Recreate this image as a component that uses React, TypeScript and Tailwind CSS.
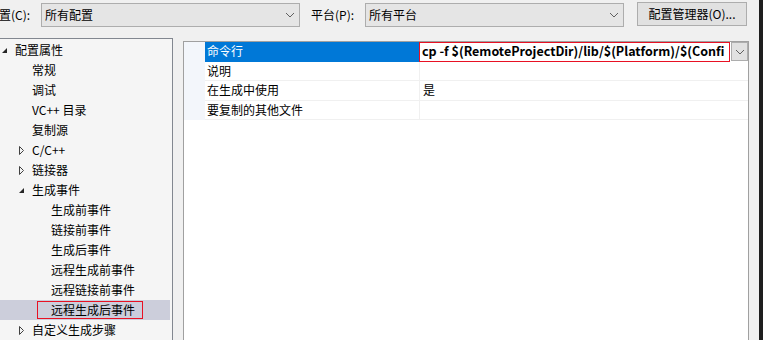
import React from 'react';

const font = { fontFamily: '"Noto Sans CJK SC", "Microsoft YaHei UI", sans-serif' };

function Chevron() {
  return (
    <svg width="10" height="6" viewBox="0 0 10 6" className="shrink-0">
      <polyline points="1,1 5,5 9,1" fill="none" stroke="#606060" strokeWidth="1" />
    </svg>
  );
}

function Expanded() {
  return (
    <svg width="7" height="7" viewBox="0 0 7 7">
      <polygon points="6,1 6,6 1,6" fill="#262626" />
    </svg>
  );
}

function Collapsed() {
  return (
    <svg width="7" height="9" viewBox="0 0 7 9">
      <polygon points="1.5,0.5 5.5,4.5 1.5,8.5" fill="none" stroke="#404040" strokeWidth="1" />
    </svg>
  );
}

type Node = { label: string; indent: number; icon?: 'open' | 'closed'; selected?: boolean };

const tree: Node[] = [
  { label: '配置属性', indent: 0, icon: 'open' },
  { label: '常规', indent: 1 },
  { label: '调试', indent: 1 },
  { label: 'VC++ 目录', indent: 1 },
  { label: '复制源', indent: 1 },
  { label: 'C/C++', indent: 1, icon: 'closed' },
  { label: '链接器', indent: 1, icon: 'closed' },
  { label: '生成事件', indent: 1, icon: 'open' },
  { label: '生成前事件', indent: 2 },
  { label: '链接前事件', indent: 2 },
  { label: '生成后事件', indent: 2 },
  { label: '远程生成前事件', indent: 2 },
  { label: '远程链接前事件', indent: 2 },
  { label: '远程生成后事件', indent: 2, selected: true },
  { label: '自定义生成步骤', indent: 1, icon: 'closed' },
];

const props = [
  { name: '命令行', value: 'cp -f $(RemoteProjectDir)/lib/$(Platform)/$(Confi' },
  { name: '说明', value: '' },
  { name: '在生成中使用', value: '是' },
  { name: '要复制的其他文件', value: '' },
];

export default function App() {
  return (
    <div className="w-[763px] h-[340px] flex overflow-hidden bg-[#f0f0f0] text-[12px] text-black" style={font}>
      <div className="w-[759px] flex flex-col">
        {/* top toolbar */}
        <div className="h-[38px] flex items-start pt-[3px] shrink-0">
          <span className="w-[42px] leading-[24px] -ml-[1px]">置(C):</span>
          <div className="w-[259px] h-[24px] border border-[#adadad] bg-[#e5e5e5] flex items-center pl-[3px] pr-[4px] justify-between">
            <span>所有配置</span>
            <Chevron />
          </div>
          <span className="w-[65px] pl-[11px] leading-[24px]">平台(P):</span>
          <div className="w-[259px] h-[24px] border border-[#adadad] bg-[#e5e5e5] flex items-center pl-[3px] pr-[4px] justify-between">
            <span>所有平台</span>
            <Chevron />
          </div>
          <div className="ml-[13px] -mt-[1px] w-[110px] h-[24px] border border-[#adadad] bg-[#e1e1e1] flex items-center justify-center">
            配置管理器(O)...
          </div>
        </div>

        <div className="flex flex-1 min-h-0">
          {/* tree */}
          <div className="w-[173px] bg-[#f5f5f5] border-t border-r border-[#828790] pt-[1px] overflow-hidden">
            {tree.map((n) => (
              <div
                key={n.label}
                className={`h-[20px] flex items-center w-[170px] ${n.selected ? 'bg-[#cccedb]' : ''}`}
              >
                <div style={{ width: n.indent === 0 ? 0 : n.indent === 1 ? 17 : 36 }} className="shrink-0" />
                <div className="w-[15px] flex items-center justify-start pl-[1px] shrink-0">
                  {n.icon === 'open' && <Expanded />}
                  {n.icon === 'closed' && <Collapsed />}
                </div>
                <span
                  className={`leading-[16px] ${n.selected ? 'border border-[#e81123] pl-[13px] pr-[7px] -ml-[14px] h-[18px] flex items-center' : ''}`}
                >
                  {n.label}
                </span>
              </div>
            ))}
          </div>

          {/* property grid */}
          <div className="ml-[10px] mt-[3px] w-[566px] bg-white border-t border-l border-r border-[#a0a0a0] flex flex-col">
            {props.map((p, i) => (
              <div key={p.name} className="flex h-[19.5px] shrink-0">
                <div className="w-[21px] bg-[#f3f6fb] shrink-0" />
                <div
                  className={`w-[214px] shrink-0 flex items-center pl-[2px] border-b ${
                    i === 0 ? 'bg-[#0078d7] text-white border-[#0078d7]' : 'border-[#f0f0f0]'
                  }`}
                >
                  {p.name}
                </div>
                {i === 0 ? (
                  <div className="flex-1 flex min-w-0">
                    <div className="flex-1 min-w-0 border border-[#e81123] flex items-center pl-[2px] overflow-hidden whitespace-nowrap font-bold text-[12.5px]">
                      {p.value}
                    </div>
                    <div className="w-[17px] h-[19px] bg-[#e1e1e1] border border-[#adadad] flex items-center justify-center shrink-0 ml-[1px]">
                      <Chevron />
                    </div>
                  </div>
                ) : (
                  <div className="flex-1 flex items-center pl-[3px] border-b border-l border-[#f0f0f0]">{p.value}</div>
                )}
              </div>
            ))}
            <div className="flex-1" />
          </div>
        </div>
      </div>
      <div className="w-[4px] bg-[#1e1e1e]" />
    </div>
  );
}
